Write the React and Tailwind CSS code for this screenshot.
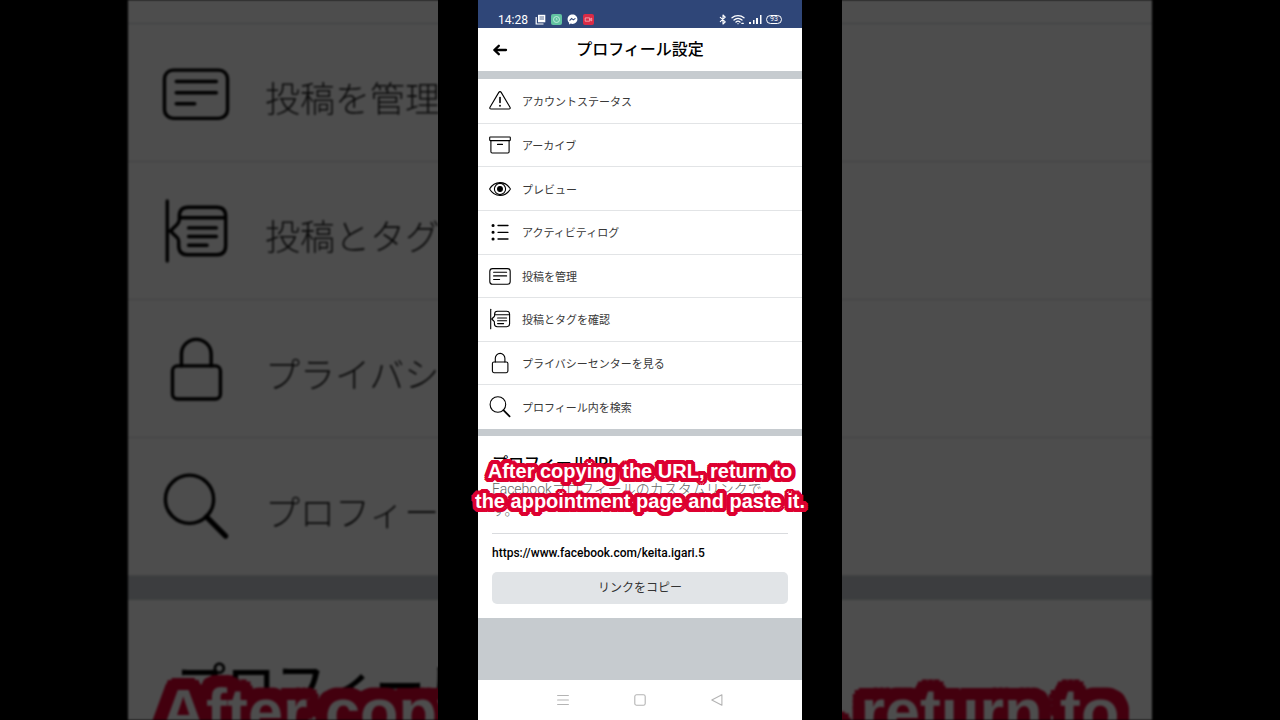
import React from "react";

const stroke = {
  fill: "none",
  stroke: "currentColor",
  strokeWidth: 1.1,
  strokeLinecap: "round",
  strokeLinejoin: "round",
};

const drawings = {
  warning: (
    <>
      <path d="M9.800 2.400 1 17.300c-.5.900 0 1.700 1 1.700h18c1 0 1.500-.8 1-1.700L12.200 2.400c-.6-1-1.800-1-2.400 0Z" />
      <path d="M11 7.500v5" strokeWidth="1.600" />
      <path d="M11 15.700v.1" strokeWidth="1.900" />
    </>
  ),
  archive: (
    <>
      <rect x="0.700" y="3" width="20.600" height="3.600" rx="0.600" />
      <path d="M1.900 6.600v11.200q0 1.200 1.200 1.200h15.800q1.200 0 1.200-1.200V6.600M8.500 10.400h5" />
    </>
  ),
  eye: (
    <>
      <path d="M.6 11C3 6.800 6.600 4.600 11 4.600S19 6.800 21.400 11c-2.400 4.200-6 6.400-10.400 6.400S3 15.200.6 11Z" />
      <circle cx="11" cy="11" r="5.600" />
      <circle cx="11" cy="11" r="2.400" fill="currentColor" />
    </>
  ),
  list: (
    <>
      <path d="M9 4.500h10M9 11.300h10M9 18h10" strokeWidth="1.300" />
      <path d="M4 4.500h.1M4 11.300h.1M4 18h.1" strokeWidth="3" />
    </>
  ),
  post: (
    <>
      <rect x="0.800" y="3.600" width="20.400" height="15.600" rx="2.800" />
      <path d="M4.600 7.300h13M4.600 10.900h13M4.600 14.500h6" />
    </>
  ),
  tag: (
    <>
      <path d="M1.700 1.300v19.400" />
      <path d="M8.500 3.300h9.200q2.900 0 2.900 2.900v9.600q0 2.900-2.900 2.900H8.300q-2.900 0-2.900-2.900v-1.600q0-.7-.6-1.200L2.700 11l2.100-2q.8-.8.8-1.600V6.200q0-2.900 2.900-2.900ZM5.800 6.700h14.600" />
      <path d="M8.600 10h9M8.600 12.800h9M8.600 15.600h6" />
    </>
  ),
  lock: (
    <>
      <rect x="3.400" y="10" width="15.500" height="10.700" rx="1.600" />
      <path d="M6.300 10V6.200a4.800 4.800 0 0 1 9.600 0V10" />
    </>
  ),
  search: (
    <>
      <circle cx="8.900" cy="8.500" r="7.800" />
      <path d="m14.400 14.200 6.200 6.200" strokeWidth="1.700" />
    </>
  ),
};

function Icon({ name, className }) {
  return (
    <svg viewBox="0 0 22 22" className={className} aria-hidden="true" {...stroke}>
      {drawings[name]}
    </svg>
  );
}

const items = [
  ["warning", "アカウントステータス"],
  ["archive", "アーカイブ"],
  ["eye", "プレビュー"],
  ["list", "アクティビティログ"],
  ["post", "投稿を管理"],
  ["tag", "投稿とタグを確認"],
  ["lock", "プライバシーセンターを見る"],
  ["search", "プロフィール内を検索"],
];

function Backdrop() {
  return (
    <div
      aria-hidden="true"
      className="relative col-start-1 row-start-1 h-full w-4/5 justify-self-center overflow-hidden bg-white opacity-30 blur-[1px]"
    >
      <div className="h-6 border-b border-[#ccd0d4]" />
      {items.slice(4).map(([icon, label]) => (
        <div
          key={label}
          className="flex h-[138px] items-center gap-[35px] border-b border-[#d6d9dc] pl-[34px] text-[35px] leading-[52px] font-light text-[#222]"
        >
          <Icon name={icon} className="size-[68px] shrink-0 text-black" />
          <span className="whitespace-nowrap pt-4">{label}</span>
        </div>
      ))}
      <div className="h-6 bg-[#c6cbcf]" />
      <p className="pl-12 pt-[50px] text-[50px] leading-[76px] font-medium text-black">プロフィールURL</p>
      <Caption className="top-[664px] text-[63px] leading-[94px] [text-shadow:12px_0_#dd0030,-12px_0_#dd0030,0_12px_#dd0030,0_-12px_#dd0030,12px_6px_#dd0030,12px_-6px_#dd0030,-12px_6px_#dd0030,-12px_-6px_#dd0030,6px_12px_#dd0030,6px_-12px_#dd0030,-6px_12px_#dd0030,-6px_-12px_#dd0030,10px_10px_#dd0030,10px_-10px_#dd0030,-10px_10px_#dd0030,-10px_-10px_#dd0030,6px_0_#dd0030,-6px_0_#dd0030,0_6px_#dd0030,0_-6px_#dd0030]" />
    </div>
  );
}

function Caption({ className }) {
  return (
    <p
      className={
        "pointer-events-none absolute left-1/2 -translate-x-1/2 whitespace-nowrap text-center font-['Liberation_Sans',sans-serif] font-bold text-white " +
        className
      }
    >
      After copying the URL, return to
      <br />
      the appointment page and paste it.
    </p>
  );
}

function StatusBar() {
  return (
    <div className="flex h-7 shrink-0 items-end justify-between bg-[#2f4678] pr-5 pl-5 text-white">
      <div className="flex h-[17px] items-center gap-[5px]">
        <span className="mr-[2px] text-[12px] leading-4">14:28</span>
        <svg viewBox="0 0 11 11" className="size-[11px]" aria-hidden="true">
          <path d="M3 .8h7.300v7.500H3z" fill="#fff" />
          <path d="M1.200 3v7h7.300" fill="none" stroke="#fff" strokeWidth="1.200" />
          <path d="M4.500 3h4.500M4.500 5h4.500" stroke="#2f4678" strokeWidth=".8" />
        </svg>
        <svg viewBox="0 0 11 11" className="size-[11px]" aria-hidden="true">
          <rect width="11" height="11" rx="2" fill="#62c3a1" />
          <circle cx="5.500" cy="5.500" r="3" fill="none" stroke="#c5eee0" strokeWidth=".9" />
          <path d="M5.500 4v1.700h1" fill="none" stroke="#c5eee0" strokeWidth=".7" />
        </svg>
        <svg viewBox="0 0 11 11" className="size-[11px]" aria-hidden="true">
          <path
            d="M5.500.6C2.700.6.600 2.600.600 5.300c0 1.400.6 2.600 1.500 3.400v1.700l1.700-.8c.5.200 1.100.3 1.700.3 2.800 0 4.900-2 4.900-4.600S8.300.6 5.500.6Z"
            fill="#fff"
          />
          <path d="m2.600 6.600 2-2.200 1.700 1.500 2.100-1.500" fill="none" stroke="#2f4678" strokeWidth="1.100" />
        </svg>
        <svg viewBox="0 0 11 11" className="size-[11px]" aria-hidden="true">
          <rect width="11" height="11" rx="2" fill="#d92b46" />
          <path d="M2.200 3.900h4.500v3.300H2.200zM6.700 5.500l2-1.300v2.700Z" fill="none" stroke="#f7b5bf" strokeWidth=".8" />
        </svg>
      </div>
      <div className="flex h-[17px] items-center gap-1">
        <svg viewBox="0 0 8 11" className="h-[11px] w-2" aria-hidden="true" {...stroke}>
          <path d="m1.300 3.300 5 4.500L4 10V1l2.300 2.200-5 4.500" />
        </svg>
        <svg viewBox="0 0 14 11" className="h-[11px] w-[14px]" aria-hidden="true" {...stroke} strokeWidth="1.300">
          <path d="M1 3.800c3.400-3 8.600-3 12 0M3 6c2.300-2 5.700-2 8 0M5 8c1.200-1 2.800-1 4 0M7 9.600v.1" />
          <path d="M10.800 9.300h1.500" />
        </svg>
        <svg viewBox="0 0 13 11" className="h-[11px] w-[13px]" fill="#fff" aria-hidden="true">
          <path d="M0 8h2v2H0zM4 6h1.500v4H4zM7 4h2v6H7zM11 1h1.500v9H11z" />
        </svg>
        <span className="flex h-[9px] w-4 items-center justify-center rounded-full border border-white text-[7px] leading-none">
          93
        </span>
      </div>
    </div>
  );
}

function Phone() {
  return (
    <div className="relative flex h-full w-[324px] flex-col bg-white text-[#303030]">
      <StatusBar />
      <header className="grid h-[43px] shrink-0 grid-cols-[44px_1fr_44px] items-center">
        <button type="button" aria-label="戻る" className="flex h-full items-center pl-[14px] text-black">
          <svg viewBox="0 0 16 14" className="h-[14px] w-4" aria-hidden="true" {...stroke} strokeWidth="2.300">
            <path d="M14 7H2.500M6.800 2.800 2.300 7l4.500 4.200" />
          </svg>
        </button>
        <h1 className="text-center text-base leading-6 font-medium text-black">プロフィール設定</h1>
      </header>
      <div className="h-2 shrink-0 bg-[#c6cbcf]" />
      <ul className="grid flex-1 auto-rows-fr divide-y divide-[#e2e4e6] pt-px">
        {items.map(([icon, label]) => (
          <li key={label}>
            <button
              type="button"
              className="flex h-full w-full items-center gap-[11px] pl-[11px] text-left text-[11px] leading-4 text-[#383838]"
            >
              <Icon name={icon} className="size-[22px] shrink-0 text-black" />
              <span className="pt-1">{label}</span>
            </button>
          </li>
        ))}
      </ul>
      <div className="h-[7px] shrink-0 bg-[#c6cbcf]" />
      <section className="flex shrink-0 flex-col px-[14px] pt-4 pb-[14px]">
        <h2 className="text-base leading-6 font-medium text-black">プロフィールURL</h2>
        <p className="mt-[3px] text-sm leading-[21px] font-light text-[#666]">Facebookプロフィールのカスタムリンクです。</p>
        <p className="mt-3 border-t border-[#d9dbde] text-[12px] leading-[38px] font-medium text-black">
          https://www.facebook.com/keita.igari.5
        </p>
        <button type="button" className="h-8 rounded-[5px] bg-[#e1e4e7] text-[12px] text-[#333]">
          リンクをコピー
        </button>
      </section>
      <div className="h-[62px] shrink-0 bg-[#c6cbcf]" />
      <nav className="flex h-10 shrink-0 items-center justify-center gap-[65px] text-[#b4b4b4]">
        <button type="button" aria-label="メニュー">
          <svg viewBox="0 0 12 12" className="size-3" aria-hidden="true" {...stroke}>
            <path d="M.6 1.500h10.800M.6 6h10.800M.6 10.500h10.800" />
          </svg>
        </button>
        <button type="button" aria-label="ホーム">
          <svg viewBox="0 0 12 12" className="size-3" aria-hidden="true" {...stroke}>
            <rect x="0.800" y="0.800" width="10.400" height="10.400" rx="1.800" />
          </svg>
        </button>
        <button type="button" aria-label="戻るキー">
          <svg viewBox="0 0 12 12" className="size-3" aria-hidden="true" {...stroke}>
            <path d="M10.900.8v10.400L.8 6Z" />
          </svg>
        </button>
      </nav>
      <Caption className="top-[456px] text-[20px] leading-[30px] [text-shadow:4px_0_#dd0030,-4px_0_#dd0030,0_4px_#dd0030,0_-4px_#dd0030,4px_2px_#dd0030,4px_-2px_#dd0030,-4px_2px_#dd0030,-4px_-2px_#dd0030,2px_4px_#dd0030,2px_-4px_#dd0030,-2px_4px_#dd0030,-2px_-4px_#dd0030,3px_3px_#dd0030,3px_-3px_#dd0030,-3px_3px_#dd0030,-3px_-3px_#dd0030,2px_0_#dd0030,-2px_0_#dd0030,0_2px_#dd0030,0_-2px_#dd0030]" />
    </div>
  );
}

export default function App() {
  return (
    <main
      lang="ja"
      className="grid h-screen grid-cols-1 grid-rows-1 overflow-hidden bg-black font-[Roboto,'Noto_Sans_CJK_JP',sans-serif]"
    >
      <Backdrop />
      <div className="relative col-start-1 row-start-1 h-full justify-self-center bg-black px-10">
        <Phone />
      </div>
    </main>
  );
}
